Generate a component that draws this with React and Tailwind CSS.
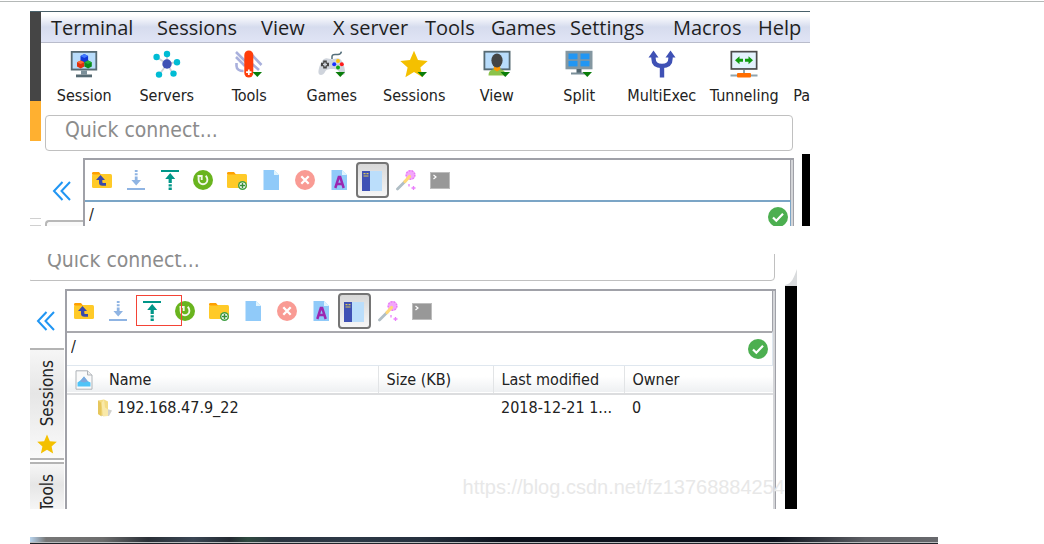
import React from "react";

const UI = "font-['DejaVu_Sans_Condensed','DejaVu_Sans',sans-serif]";

function DropMark() {
  return <path d="M17.5 22h9.5l-4.7 5z" fill="#0a7d0a" />;
}

function Icon28({ children }) {
  return (
    <svg width="28" height="28" viewBox="0 0 28 28" aria-hidden="true">
      {children}
    </svg>
  );
}

const SessionIcon = () => (
  <Icon28>
    <rect x="0.8" y="1" width="26.4" height="19.5" fill="#566a73" />
    <rect x="2.6" y="2.8" width="22.8" height="15.8" fill="#b8dcfb" />
    <rect x="11" y="20.5" width="6" height="4" fill="#7b8f99" />
    <rect x="6" y="24.5" width="16" height="2.8" fill="#566a73" />
    <path d="M10.5 6l3.8-2 3.8 2v5l-3.8 2.4-3.8-2.4z" fill="#1238d8" />
    <path d="M10.5 6l3.8-2 3.8 2-3.8 2z" fill="#3f78ff" />
    <path d="M7 12.2l3.7-1.8 3.7 1.8v4.3l-3.7 2-3.7-2z" fill="#e0300c" />
    <path d="M7 12.2l3.7-1.8 3.7 1.8-3.7 1.8z" fill="#ff6a35" />
    <path d="M14.4 12.2l3.7-1.8 3.7 1.8v4.3l-3.7 2-3.7-2z" fill="#0c8a1c" />
    <path d="M14.4 12.2l3.7-1.8 3.7 1.8-3.7 1.8z" fill="#25b538" />
  </Icon28>
);

const ServersIcon = () => (
  <Icon28>
    <path d="M14 14V4M14 14L3.5 7M14 14l9.5-2M14 14L6 25M14 14l6 9.5" stroke="#cfd2d8" strokeWidth="1.8" />
    <circle cx="14" cy="14" r="4.7" fill="#3f51b5" />
    <circle cx="14" cy="4" r="3.2" fill="#00bcd4" />
    <circle cx="3.6" cy="7" r="3.2" fill="#00bcd4" />
    <circle cx="24" cy="12.3" r="3.2" fill="#00bcd4" />
    <circle cx="6" cy="24.6" r="3.2" fill="#00bcd4" />
    <circle cx="20.5" cy="23.6" r="3.2" fill="#00bcd4" />
  </Icon28>
);

const ToolsIcon = () => (
  <Icon28>
    <path d="M1 2l10 10M1.500 13v3c0 3 3 5 7 5M1 7l9 9M17 5l9.500 10M16 13l8 7" stroke="#a9b0dc" strokeWidth="2.600" fill="none" />
    <rect x="9.300" y="0.500" width="9" height="27" rx="4.500" fill="#ff3d0a" />
    <path d="M13.800 19.500v5.400M11.100 22.200h5.400" stroke="#fff" strokeWidth="1.700" />
    <DropMark />
  </Icon28>
);

const GamesIcon = () => (
  <Icon28>
    <path d="M14 9V6.600c0-1.600 1-2.200 3-2.200h3c2 0 3-.6 3.400-2.800" fill="none" stroke="#546e7a" strokeWidth="1.500" />
    <path d="M6 9c3-1.800 5 .3 8 .3S19 7.200 22 9c3 2 5.500 10 5 14-.4 3-4.500 2.500-6-1-.9-2-2-3-7-3s-6 1-7 3c-1.500 3.500-6 4-6.500 1C0 19 3 11 6 9z" fill="#cfd4dc" />
    <path d="M7 10.500v8M3 14.500h8" stroke="#454545" strokeWidth="3.600" />
    <path d="M7 12.500v4M5 14.500h4" stroke="#cfd4dc" strokeWidth="1.500" />
    <circle cx="20" cy="11" r="2" fill="#ffc107" />
    <circle cx="16.200" cy="14.300" r="2" fill="#1a30ff" />
    <circle cx="23.800" cy="14.300" r="2" fill="#ff1a1a" />
    <circle cx="20" cy="17.600" r="2" fill="#13a513" />
    <DropMark />
  </Icon28>
);

const StarPath = () => (
  <path d="M14 .8l4 9.200 9.700.9-7.300 6.600 2.200 9.700L14 22l-8.600 5.200 2.200-9.700L.3 10.900l9.700-.9z" fill="#f4c000" />
);

const StarIcon = () => (
  <Icon28>
    <StarPath />
    <DropMark />
  </Icon28>
);

const ViewIcon = () => (
  <Icon28>
    <rect x="0.500" y="0.800" width="27" height="19.500" fill="#566a73" />
    <rect x="2.300" y="2.600" width="23.400" height="15.800" fill="#b8dcfb" />
    <path d="M5.500 25.500c0-5 3-6.500 8.500-6.500s8.500 1.500 8.500 6.500z" fill="#8bc34a" />
    <path d="M10.800 16h6.400v3.500l-3.200 2-3.200-2z" fill="#ff9800" />
    <ellipse cx="14" cy="10.500" rx="5.600" ry="7" fill="#444" />
    <DropMark />
  </Icon28>
);

const SplitIcon = () => (
  <Icon28>
    <rect x="0.500" y="0.800" width="27" height="18.500" fill="#8497a1" />
    <rect x="3.500" y="3.500" width="9" height="5.800" fill="#2196f3" />
    <rect x="15.500" y="3.500" width="9" height="5.800" fill="#2196f3" />
    <rect x="3.500" y="10.800" width="9" height="5.600" fill="#2196f3" />
    <rect x="15.500" y="10.800" width="9" height="5.600" fill="#2196f3" />
    <rect x="11.500" y="19" width="5" height="4" fill="#506570" />
    <rect x="6" y="22.500" width="16" height="2" fill="#7b8f99" />
    <DropMark />
  </Icon28>
);

const MultiExecIcon = () => (
  <Icon28>
    <path d="M5.500 6v2.500c0 5 3 7.500 8.500 7.500s8.500-2.500 8.500-7.500V6M14 15v12.500" fill="none" stroke="#3f51b5" strokeWidth="4.400" />
    <path d="M.5 7.500l5-7 5 7zM17.500 7.500l5-7 5 7z" fill="#3f51b5" />
  </Icon28>
);

const TunnelingIcon = () => (
  <Icon28>
    <rect x="0.500" y="0.800" width="27" height="19" fill="#4a4a4a" />
    <rect x="2.200" y="2.500" width="23.600" height="15.600" fill="#e3f2fd" />
    <path d="M5 10.300l4.500-4v2.500H13v3H9.500v2.500zM23 10.300l-4.500-4v2.500H15v3h3.500v2.500z" fill="#109a10" />
    <path d="M14 20v4M.5 25.500h27" stroke="#90a4ae" strokeWidth="2" />
    <rect x="7" y="23" width="14" height="4.500" rx="1" fill="#ff6d00" />
  </Icon28>
);

const Blank = () => <Icon28 />;

const tools = [
  ["Session", SessionIcon],
  ["Servers", ServersIcon],
  ["Tools", ToolsIcon],
  ["Games", GamesIcon],
  ["Sessions", StarIcon],
  ["View", ViewIcon],
  ["Split", SplitIcon],
  ["MultiExec", MultiExecIcon],
  ["Tunneling", TunnelingIcon],
  ["Packages", Blank],
];

const menus = ["Terminal", "Sessions", "View", "X server", "Tools", "Games", "Settings", "Macros", "Help"];

const Page = () => (
  <>
    <path d="M2.500 0H13l5 5v15H2.500z" fill="#90caf9" />
    <path d="M13 0l5 5h-5z" fill="#e1f5fe" />
  </>
);

const Folder = () => (
  <>
    <rect x="0" y="4" width="20" height="14" rx="1.500" fill="#ffca28" />
    <path d="M0 4.500v-1C0 2.500.5 2 1.500 2H7l2 2.500z" fill="#ffa000" />
  </>
);

const fileActions = [
  ["Parent folder", <><Folder /><path d="M8.500 5l4.500 5h-2.700v2c0 .7.4 1 1.200 1H14v2.800h-3.500c-2.300 0-3.500-1.200-3.500-3.300V10H4z" fill="#3949ab" /></>],
  ["Download", <path d="M8.800 0h2.800v2H8.800zM8.800 3.200h2.800v2H8.800zM8.800 6.400h2.800V10H15l-4.800 5.500L5.400 10h3.400zM1 18h18v2H1z" fill="#8fb4e3" />],
  ["Upload", <path d="M1 0h18v2H1zM10.200 3l5 6h-3.400v4H8.600V9H5.200zM8.600 14.200h3.200v2.200H8.600zM8.600 17.400h3.200V20H8.600z" fill="#009688" />],
  ["Refresh", <><circle cx="10" cy="10" r="10" fill="#69b41e" /><path d="M5.600 5.500v4.300a4.400 4.400 0 0 0 8.800 0c0-1.600-.6-3-1.700-4M4.500 6h4.200v4" fill="none" stroke="#f1f8e9" strokeWidth="1.900" /></>],
  ["New folder", <><Folder /><circle cx="15.500" cy="15.500" r="4.500" fill="#43a047" /><circle cx="15.500" cy="15.500" r="3" fill="#fff" /><path d="M15.500 13v5M13 15.500h5" stroke="#388e3c" strokeWidth="1.500" /></>],
  ["New file", <Page />],
  ["Delete", <><circle cx="10" cy="10" r="10" fill="#f99b94" /><path d="M6.300 6.300l7.400 7.400M13.700 6.300l-7.400 7.400" stroke="#fff" strokeWidth="2.300" /></>],
  ["Rename", <><Page /><path d="M6.300 18l3.500-11h1.400l3.500 11M7.500 14h6" fill="none" stroke="#9c27b0" strokeWidth="2.500" /></>],
  ["Show panel", <><rect x="0" y="1" width="20" height="20" fill="#bbdefb" /><rect x="0" y="1" width="8" height="20" fill="#3f51b5" /><path d="M1.500 3h2v1.200h-2zM4.500 3h2v1.200h-2zM1.500 5.500h5v1h-5z" fill="#d9c65a" /></>],
  ["Highlight", <><circle cx="14.500" cy="5" r="5" fill="#f3a6fb" /><circle cx="14.500" cy="5" r="4.300" fill="none" stroke="#e77df5" strokeWidth="1.400" strokeDasharray="1.500 1.500" /><path d="M1.500 19L9 11.500" stroke="#b0bec5" strokeWidth="2.800" strokeLinecap="round" /><path d="M9 11.500l4.500-5" stroke="#ffd97a" strokeWidth="3.200" strokeLinecap="round" /><path d="M17.500 16v4M15.500 18h4M13 14v2.500" stroke="#ea80fc" strokeWidth="1.300" /></>],
  ["Terminal here", <><rect x="0" y="2" width="20" height="17" fill="#bdbdbd" /><rect x="1" y="3" width="18" height="15" fill="#989898" /><path d="M3.500 5l2.500 2-2.500 2" fill="none" stroke="#fff" strokeWidth="1.200" /></>],
];

function Collapse() {
  return (
    <button aria-label="Collapse" className="flex">
      <svg width="20" height="20" viewBox="0 0 20 20" aria-hidden="true">
        <path d="M10.500 1L2 10l8.500 9M18 1l-8.500 9 8.500 9" fill="none" stroke="#2196f3" strokeWidth="2" />
      </svg>
    </button>
  );
}

function QuickConnect() {
  return (
    <input
      aria-label="Quick connect"
      placeholder="Quick connect..."
      className="h-9 w-full rounded border border-[#c0c0c0] bg-white px-[19px] pb-1.5 text-[21px] leading-7 font-['DejaVu_Sans_Condensed','DejaVu_Sans',sans-serif] text-[#888] placeholder:text-[#8c8c8c] outline-none"
    />
  );
}

function FilePanel({ active, marked, children }) {
  return (
    <section className="flex min-w-0 flex-1 flex-col border-t-2 border-r border-l-2 border-[#a0a1a8] bg-[#d4d5d8] pr-0.5">
      <div className="relative flex h-10 items-center border-r border-[#a0a1a8] bg-white">
        <div className="grid w-[372px] shrink-0 grid-cols-11">
          {fileActions.map(([name, art]) => (
            <button
              key={name}
              aria-label={name}
              className={
                name === "Show panel"
                  ? "flex h-9 items-center justify-center rounded border-2 border-[#757575] bg-gradient-to-b from-[#d8d8d8] to-[#f6f6f6]"
                  : "flex h-9 items-center justify-center"
              }
            >
              <svg width="20" height="21" viewBox="0 0 20 21" aria-hidden="true">{art}</svg>
            </button>
          ))}
        </div>
        {marked && <div className="absolute top-1 left-[69px] h-[31px] w-[46px] border border-[#f44336]" />}
      </div>
      <div
        className={
          active
            ? "flex h-8 items-center border-t-2 border-r border-[#7ba5c6] bg-white pr-0.5 pl-1"
            : "flex h-[35px] items-center border-t-2 border-r border-b border-t-[#a9a9ae] border-r-[#dfe7ef] border-b-[#dfe7ef] bg-white pr-1 pl-1"
        }
      >
        <input
          aria-label="Remote path"
          defaultValue="/"
          className={`min-w-0 flex-1 bg-transparent pb-1 text-base leading-5 text-[#222] outline-none ${UI}`}
        />
        <svg width="20" height="20" viewBox="0 0 20 20" aria-hidden="true">
          <circle cx="10" cy="10" r="10" fill="#4caf50" />
          <path d="M5 10.500l3.300 3.200L15 6.700" fill="none" stroke="#fff" strokeWidth="2.200" />
        </svg>
      </div>
      {children}
    </section>
  );
}

function FileTable() {
  const head = "border-r border-[#e2e4e6] p-0 pl-2 font-normal last:border-r-0";
  return (
    <div className="flex-1 bg-white">
      <table className="w-full table-fixed border-collapse text-left text-base leading-5 text-[#222]">
        <colgroup>
          <col />
          <col className="w-[115px]" />
          <col className="w-[131px]" />
          <col className="w-[149px]" />
        </colgroup>
        <thead>
          <tr className="h-7 border-b-2 border-[#dcdddf] bg-gradient-to-b from-white from-40% to-[#eef0f2]">
            <th className={head}>
              <span className="flex items-center gap-4">
                <svg width="18" height="20" viewBox="0 0 18 20" aria-hidden="true">
                  <path d="M1 .8h11.500L17 5v14.200H1z" fill="#fafafa" stroke="#aeb3b8" />
                  <path d="M12.500.8V5H17" fill="#eee" stroke="#aeb3b8" />
                  <path d="M2.500 16.500v-4L6 10l3-3.500L12.500 11l3 1.500v4z" fill="#4fc3f7" />
                  <path d="M5 11.500l4-5 4 5-4 1z" fill="#7ea7dc" />
                </svg>
                Name
              </span>
            </th>
            <th className={head}>Size (KB)</th>
            <th className={head}>Last modified</th>
            <th className={head}>Owner</th>
          </tr>
        </thead>
        <tbody>
          <tr className="h-[26px]">
            <td className="p-0 pl-[30px]">
              <span className="flex items-center gap-1">
                <svg width="16" height="18" viewBox="0 0 16 18" aria-hidden="true">
                  <path d="M7 9l8 2.500L12 17H4z" fill="#d0d0cc" />
                  <path d="M1 1.500L7 .5l4 2V14l-4 3-6-2z" fill="#f4dc84" />
                  <path d="M1 1.500L4.500 4v13.500L1 15z" fill="#e6c65c" />
                  <path d="M7 .5l1 8 3 2V17l-5 .5L4.500 4z" fill="#f9e9a9" />
                </svg>
                192.168.47.9_22
              </span>
            </td>
            <td />
            <td className="p-0 pl-2">2018-12-21 1...</td>
            <td className="p-0 pl-2">0</td>
          </tr>
        </tbody>
      </table>
    </div>
  );
}

function SideTab({ label, children }) {
  return (
    <button className="flex w-full flex-col items-center gap-2 border-y-2 border-[#b4b4b4] bg-gradient-to-b from-[#f6f6f6] via-[#e6e6e6] via-40% to-[#fafafa] pt-2.5 pb-1 text-[17px] leading-5 text-[#222]">
      <span className="rotate-180 [writing-mode:vertical-rl]">{label}</span>
      {children}
    </button>
  );
}

function MainWindow() {
  return (
    <figure className="flex h-[215px] w-full max-w-[780px] overflow-hidden bg-white">
      <div className="flex w-[11px] shrink-0 flex-col">
        <div className="h-[90px] border-t border-[#48606a] bg-[#454545]" />
        <div className="h-10 bg-[#ffb030]" />
        <div className="mt-auto h-2 border-y border-[#d0d0d0]" />
      </div>
      <div className="min-w-0 flex-1">
        <nav className="grid h-8 grid-cols-[106px_104px_72px_92px_66px_79px_103px_85px_auto] items-center border-t border-b border-t-[#48606a] border-b-[#b9bccb] bg-gradient-to-b from-white from-10% via-[#d6dcee] via-50% to-[#e0e4f5] pt-0.5 pl-2.5 text-xl leading-7 font-['Open_Sans','Noto_Sans',sans-serif] text-[#1f1f1f]">
          {menus.map((m) => (
            <button key={m} className="text-left whitespace-nowrap">{m}</button>
          ))}
        </nav>
        <div className="ml-0.5 grid w-[825px] grid-cols-10 pt-[7px] text-base leading-5 text-[#222]">
          {tools.map(([name, Art]) => (
            <button key={name} className="flex flex-col items-center gap-2">
              <Art />
              {name}
            </button>
          ))}
        </div>
        <div className="mt-[9px] mr-[17px] ml-1">
          <QuickConnect />
        </div>
        <div className="mt-[7px] flex">
          <div className="flex w-[42px] shrink-0 flex-col items-center justify-between pt-[23px]">
            <Collapse />
            <div className="ml-1 h-3 w-[38px] rounded-tl border-t-2 border-l-2 border-[#b8b8b8] bg-[#fafafa]" />
          </div>
          <FilePanel active />
          <div className="-mt-1 ml-2 w-2 shrink-0 bg-black" />
        </div>
      </div>
    </figure>
  );
}

function FilesWindow() {
  return (
    <figure className="relative flex h-[255px] w-full max-w-[767px] flex-col overflow-hidden bg-white">
      <div className="-mt-[9px] mr-[22px] -ml-[3px]">
        <QuickConnect />
      </div>
      <div className="mt-2 flex flex-1">
        <div className="flex w-[35px] shrink-0 flex-col items-start gap-[17px] pt-[22px]">
          <div className="pl-1.5">
            <Collapse />
          </div>
          <div className="flex w-[34px] flex-col gap-0.5">
            <SideTab label="Sessions">
              <svg width="20" height="20" viewBox="0 0 28 28" aria-hidden="true"><StarPath /></svg>
            </SideTab>
            <SideTab label="Tools" />
          </div>
        </div>
        <FilePanel marked>
          <FileTable />
        </FilePanel>
        <div className="-mt-5 ml-[9px] flex w-3 shrink-0 flex-col">
          <svg width="12" height="17" viewBox="0 0 12 17" aria-hidden="true">
            <path d="M12 0C9 8 7 15 0 16v1h12z" fill="#d9dbdd" />
          </svg>
          <div className="flex-1 bg-black" />
        </div>
      </div>
      <p className="absolute right-3 bottom-2.5 text-xl leading-6 whitespace-nowrap font-['Liberation_Sans',sans-serif] text-[#e8e8e8]">
        https://blog.csdn.net/fz13768884254
      </p>
    </figure>
  );
}

export default function App() {
  return (
    <main className={`overflow-hidden pt-px ${UI}`}>
      <div className="flex flex-col gap-7 border-t border-[#b4b8b7] pt-[9px] pl-[30px]">
        <MainWindow />
        <FilesWindow />
        <div className="w-full max-w-[908px]">
          <div className="h-[5px] bg-[linear-gradient(90deg,#b8d4ee_0,#777_16px,#6c6c6c_8%,#2b3037_13%,#3a4654_18%,#242a32_22%,#2f4a40_24%,#2b3440_27%,#2d3947_35%,#26313f_43%,#0c111c_52%,#0c111c_82%,#5d5f64_92%,#68696d_100%)]" />
          <div className="h-[3px] border-y border-[#b8bbbd] bg-[#20242a]" />
        </div>
      </div>
    </main>
  );
}
